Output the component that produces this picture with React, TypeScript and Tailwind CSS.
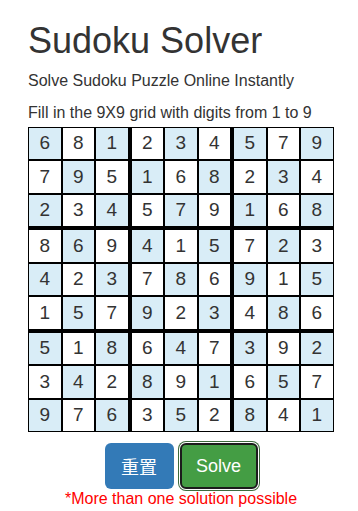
import React from 'react';

const solution: number[][] = [
  [6, 8, 1, 2, 3, 4, 5, 7, 9],
  [7, 9, 5, 1, 6, 8, 2, 3, 4],
  [2, 3, 4, 5, 7, 9, 1, 6, 8],
  [8, 6, 9, 4, 1, 5, 7, 2, 3],
  [4, 2, 3, 7, 8, 6, 9, 1, 5],
  [1, 5, 7, 9, 2, 3, 4, 8, 6],
  [5, 1, 8, 6, 4, 7, 3, 9, 2],
  [3, 4, 2, 8, 9, 1, 6, 5, 7],
  [9, 7, 6, 3, 5, 2, 8, 4, 1],
];

const Box: React.FC<{ br: number; bc: number }> = ({ br, bc }) => (
  <div className="grid grid-cols-3 gap-[2px]">
    {[0, 1, 2].flatMap((i) =>
      [0, 1, 2].map((j) => {
        const r = br * 3 + i;
        const c = bc * 3 + j;
        const shaded = (r + c) % 2 === 0;
        return (
          <div
            key={`${r}-${c}`}
            className={`w-[31.5px] h-[31.5px] flex items-center justify-center text-[19px] text-[#333] ${
              shaded ? 'bg-[#d9edf7]' : 'bg-white'
            }`}
          >
            {solution[r][c]}
          </div>
        );
      })
    )}
  </div>
);

export default function App() {
  return (
    <div className="bg-white min-h-[511px] font-['Liberation_Sans',Arial,sans-serif] text-[#333]">
      <div className="ml-[28px] w-[306px] pt-[21px]">
        <h1 className="text-[36px] leading-[1.1] font-normal">Sudoku Solver</h1>
        <p className="mt-[10px] text-[16px] leading-[20px]">Solve Sudoku Puzzle Online Instantly</p>
        <p className="mt-[12px] text-[16px] leading-[20px]">Fill in the 9X9 grid with digits from 1 to 9</p>

        <div className="mt-[4px] bg-black p-[1px] grid grid-cols-3 gap-[4px] w-[305.5px]">
          {[0, 1, 2].flatMap((br) => [0, 1, 2].map((bc) => <Box key={`${br}${bc}`} br={br} bc={bc} />))}
        </div>

        <div className="mt-[11px] flex justify-center gap-[6px]">
          <button className="w-[69px] h-[46px] rounded-[6px] bg-[#337ab7] text-white text-[18px] font-['Noto_Sans_CJK_SC',sans-serif]">
            重置
          </button>
          <button className="w-[78px] h-[46px] rounded-[6px] bg-[#449d44] text-white text-[18px] border-2 border-[#1c1c1c] shadow-[0_0_0_1px_#ffffff,0_0_0_2px_#3d6b3d]">
            Solve
          </button>
        </div>
        <p className="text-center text-[16px] leading-[20px] text-[#ff0000]">
          *More than one solution possible
        </p>
      </div>
    </div>
  );
}
